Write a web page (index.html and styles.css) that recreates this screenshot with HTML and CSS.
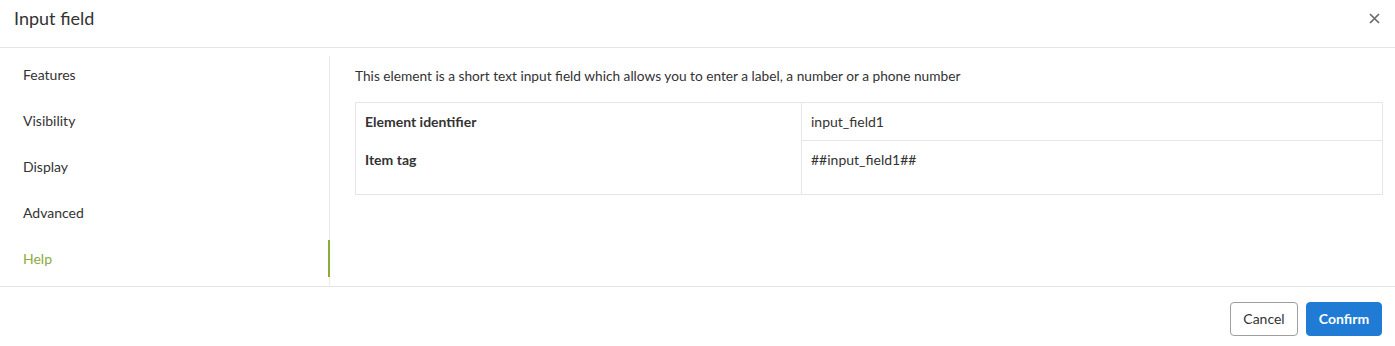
FILE: index.html
```html
<!DOCTYPE html>
<html lang="en">
<head>
  <meta charset="UTF-8">
  <meta name="viewport" content="width=device-width, initial-scale=1.0">
  <title>Input field</title>
  <link rel="stylesheet" href="styles.css">
</head>
<body>
  <div class="modal">
    <div class="modal-header">
      <h2>Input field</h2>
      <button class="close-btn" aria-label="Close">
        <svg width="11" height="11" viewBox="0 0 11 11">
          <path d="M1 1 L10 10 M10 1 L1 10" stroke="#6b6b6b" stroke-width="1.7" fill="none"/>
        </svg>
      </button>
    </div>

    <div class="modal-body">
      <div class="sidebar">
        <div class="nav-item">Features</div>
        <div class="nav-item">Visibility</div>
        <div class="nav-item">Display</div>
        <div class="nav-item">Advanced</div>
        <div class="nav-item active">Help</div>
      </div>

      <div class="content">
        <p class="description">This element is a short text input field which allows you to enter a label, a number or a phone number</p>
        <div class="help-table">
          <div class="help-labels">
            <div class="help-cell label first">Element identifier</div>
            <div class="help-cell label tall">Item tag</div>
          </div>
          <div class="help-values">
            <div class="help-cell value first">input_field1</div>
            <div class="help-cell value tall">##input_field1##</div>
          </div>
        </div>
      </div>
    </div>

    <div class="modal-footer">
      <button class="btn btn-cancel">Cancel</button>
      <button class="btn btn-confirm">Confirm</button>
    </div>
  </div>
</body>
</html>
```

FILE: styles.css
```css
* {
  margin: 0;
  padding: 0;
  box-sizing: border-box;
}

body {
  font-family: Lato, 'Open Sans', Arial, sans-serif;
  background: #ffffff;
  color: #333333;
  font-size: 14px;
}

.modal {
  width: 1395px;
  height: 346px;
  display: flex;
  flex-direction: column;
}

.modal-header {
  height: 48px;
  border-bottom: 1px solid #e5e5e5;
  display: flex;
  justify-content: space-between;
  align-items: flex-start;
  padding: 7px 15px 0 14px;
}

.modal-header h2 {
  font-size: 18px;
  font-weight: 400;
  line-height: 22px;
  color: #333333;
}

.close-btn {
  background: none;
  border: none;
  cursor: pointer;
  margin-top: 6px;
  width: 11px;
  height: 11px;
  display: flex;
}

.modal-body {
  display: flex;
  height: 238px;
}

.sidebar {
  width: 330px;
  margin-top: 8px;
  border-right: 1px solid #ebebeb;
  display: flex;
  flex-direction: column;
  gap: 9px;
}

.nav-item {
  height: 37px;
  line-height: 37px;
  padding-left: 23px;
  color: #333333;
  font-size: 14px;
  cursor: pointer;
  position: relative;
}

.nav-item.active {
  color: #8aac3c;
}

.nav-item.active::after {
  content: '';
  position: absolute;
  top: 0;
  right: -1px;
  width: 2px;
  height: 100%;
  background: #8aac3c;
}

.content {
  flex: 1;
  padding: 18px 12px 0 25px;
}

.description {
  line-height: 20px;
  font-size: 13.7px;
  color: #333333;
  margin-bottom: 16px;
}

.help-table {
  display: flex;
  border: 1px solid #e6e6e6;
}

.help-labels {
  width: 446px;
  border-right: 1px solid #e6e6e6;
}

.help-values {
  flex: 1;
}

.help-cell {
  padding: 0 9px;
  line-height: 20px;
}

.help-cell.first {
  height: 38px;
  padding-top: 9px;
}

.help-cell.tall {
  height: 53px;
  padding-top: 9px;
}

.help-cell.label {
  font-weight: 700;
}

.help-values .help-cell.first {
  border-bottom: 1px solid #e6e6e6;
}

.modal-footer {
  border-top: 1px solid #e5e5e5;
  flex: 1;
  display: flex;
  justify-content: flex-end;
  align-items: flex-start;
  gap: 8px;
  padding: 15px 13px 0 0;
}

.btn {
  height: 34px;
  border-radius: 4px;
  font-family: Lato, 'Open Sans', Arial, sans-serif;
  font-size: 14px;
  line-height: 30px;
  cursor: pointer;
}

.btn-cancel {
  width: 68px;
  background: #ffffff;
  border: 1px solid #9e9e9e;
  color: #333333;
}

.btn-confirm {
  width: 76px;
  background: #1f7bd3;
  border: 1px solid #1f7bd3;
  color: #ffffff;
  font-weight: 700;
}
```
